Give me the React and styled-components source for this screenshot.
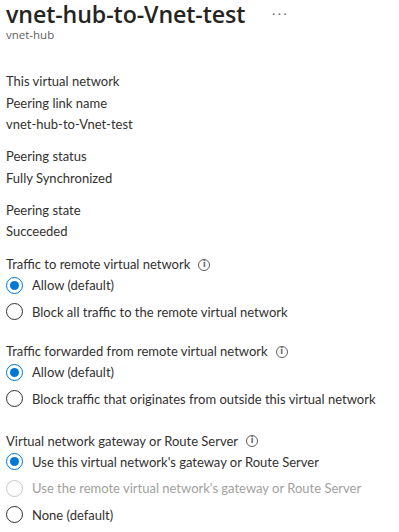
import React, { useState } from "react";
import styled, { createGlobalStyle } from "styled-components";

const GlobalStyle = createGlobalStyle`
  html, body {
    margin: 0;
    padding: 0;
    background: #ffffff;
  }
  body {
    font-family: "Lato", "Open Sans", "Liberation Sans", sans-serif;
    color: #323130;
  }
`;

const Page = styled.div`
  width: 399px;
  height: 532px;
  overflow: hidden;
  padding: 1px 6px 0;
  box-sizing: border-box;
`;

const Header = styled.header`
  display: flex;
  align-items: center;
  gap: 26px;
`;

const Title = styled.h1`
  margin: 0;
  font-family: "Open Sans", "Noto Sans", sans-serif;
  font-size: 23.2px;
  font-weight: 600;
  line-height: 27px;
  letter-spacing: -0.1px;
  color: #252423;
`;

const More = styled.button`
  border: none;
  background: transparent;
  padding: 0;
  color: #605e5c;
  font-size: 14px;
  line-height: 14px;
  letter-spacing: 1px;
  margin-top: -4px;
  cursor: pointer;
`;

const Subtitle = styled.div`
  font-family: "Open Sans", "Noto Sans", sans-serif;
  font-size: 11.5px;
  line-height: 14px;
  color: #605e5c;
`;

const Info = styled.section`
  margin-top: 29px;
`;

const Line = styled.div`
  font-size: 13px;
  line-height: 21.5px;
  margin-top: ${(p) => (p.gap ? "10.5px" : "0")};
`;

const Group = styled.fieldset`
  border: none;
  margin: ${(p) => p.top}px 0 0;
  padding: 0;
  display: flex;
  flex-direction: column;
`;

const Legend = styled.div`
  display: flex;
  align-items: center;
  gap: 8px;
  font-size: 13px;
  line-height: 21px;
  margin-bottom: -3px;
`;

const InfoIcon = styled.span`
  width: 10px;
  height: 10px;
  border: 1px solid #605e5c;
  border-radius: 50%;
  display: inline-flex;
  align-items: center;
  justify-content: center;
  font-size: 8px;
  font-weight: 600;
  line-height: 1;
  color: #605e5c;
  font-family: "DejaVu Sans", sans-serif;
`;

const Option = styled.label`
  display: flex;
  align-items: center;
  gap: 9px;
  height: 26.5px;
  font-size: 13px;
  white-space: nowrap;
  color: ${(p) => (p.disabled ? "#a19f9d" : "#323130")};
  cursor: ${(p) => (p.disabled ? "default" : "pointer")};
`;

const Circle = styled.span`
  width: 17px;
  height: 17px;
  box-sizing: border-box;
  border-radius: 50%;
  border: 1px solid
    ${(p) => (p.disabled ? "#c8c6c4" : p.checked ? "#0078d4" : "#323130")};
  display: flex;
  align-items: center;
  justify-content: center;
  flex-shrink: 0;
  &::after {
    content: "";
    width: 9px;
    height: 9px;
    border-radius: 50%;
    background: #0078d4;
    display: ${(p) => (p.checked ? "block" : "none")};
  }
`;

const groups = [
  {
    name: "traffic",
    label: "Traffic to remote virtual network",
    top: 11.5,
    options: ["Allow (default)", "Block all traffic to the remote virtual network"],
  },
  {
    name: "forwarded",
    label: "Traffic forwarded from remote virtual network",
    top: 16,
    options: [
      "Allow (default)",
      "Block traffic that originates from outside this virtual network",
    ],
  },
  {
    name: "gateway",
    label: "Virtual network gateway or Route Server",
    top: 18.5,
    options: [
      "Use this virtual network's gateway or Route Server",
      "Use the remote virtual network's gateway or Route Server",
      "None (default)",
    ],
    disabled: [1],
  },
];

const RadioGroup = ({ group, value, onChange }) => (
  <Group top={group.top}>
    <Legend>
      {group.label}
      <InfoIcon>i</InfoIcon>
    </Legend>
    {group.options.map((opt, i) => {
      const disabled = group.disabled && group.disabled.includes(i);
      return (
        <Option
          key={opt}
          disabled={disabled}
          onClick={() => !disabled && onChange(i)}
        >
          <Circle checked={value === i} disabled={disabled} />
          {opt}
        </Option>
      );
    })}
  </Group>
);

const App = () => {
  const [values, setValues] = useState({ traffic: 0, forwarded: 0, gateway: 0 });

  return (
    <>
      <GlobalStyle />
      <Page>
        <Header>
          <Title>vnet-hub-to-Vnet-test</Title>
          <More>···</More>
        </Header>
        <Subtitle>vnet-hub</Subtitle>

        <Info>
          <Line>This virtual network</Line>
          <Line>Peering link name</Line>
          <Line>vnet-hub-to-Vnet-test</Line>
          <Line gap>Peering status</Line>
          <Line>Fully Synchronized</Line>
          <Line gap>Peering state</Line>
          <Line>Succeeded</Line>
        </Info>

        {groups.map((g) => (
          <RadioGroup
            key={g.name}
            group={g}
            value={values[g.name]}
            onChange={(i) => setValues({ ...values, [g.name]: i })}
          />
        ))}
      </Page>
    </>
  );
};

export default App;
